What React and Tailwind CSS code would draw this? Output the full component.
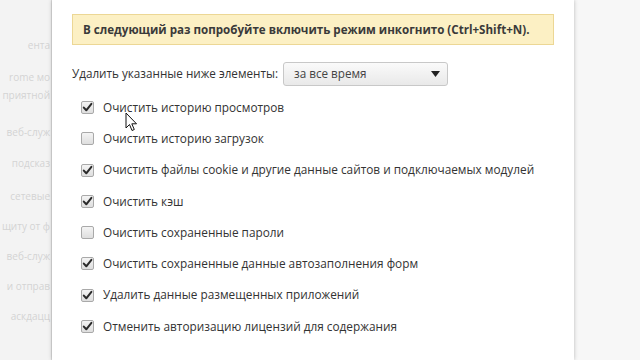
import React from 'react';

const items = [
  { label: 'Очистить историю просмотров', checked: true },
  { label: 'Очистить историю загрузок', checked: false },
  { label: 'Очистить файлы cookie и другие данные сайтов и подключаемых модулей', checked: true },
  { label: 'Очистить кэш', checked: true },
  { label: 'Очистить сохраненные пароли', checked: false },
  { label: 'Очистить сохраненные данные автозаполнения форм', checked: true },
  { label: 'Удалить данные размещенных приложений', checked: true },
  { label: 'Отменить авторизацию лицензий для содержания', checked: true },
];

// faded settings page text visible behind the dialog
const backdrop = [
  { text: 'ента', top: 'mt-[38px]' },
  { text: 'rome мо', top: 'mt-[18px]' },
  { text: 'приятной', top: 'mt-[4px]' },
  { text: 'веб-служ', top: 'mt-[23px]' },
  { text: 'подсказ', top: 'mt-[17px]' },
  { text: 'сетевые', top: 'mt-[19px]' },
  { text: 'щиту от ф', top: 'mt-[16px]' },
  { text: 'веб-служ', top: 'mt-[16px]' },
  { text: 'и отправ', top: 'mt-[16px]' },
  { text: 'аскдацц', top: 'mt-[16px]' },
];

const Checkbox = ({ checked }) => (
  <span className="w-[13px] h-[13px] shrink-0 rounded-[2px] border border-[#a9a9a9] bg-gradient-to-b from-[#f4f4f4] to-[#dedede] flex items-center justify-center">
    {checked && (
      <svg width="11" height="11" viewBox="0 0 11 11">
        <path d="M1.8 5.6 L4.3 8.3 L9.4 1.8" fill="none" stroke="#2b2b2b" strokeWidth="2" strokeLinecap="round" strokeLinejoin="round" />
      </svg>
    )}
  </span>
);

export default function App() {
  return (
    <div className="w-[640px] h-[360px] overflow-hidden flex bg-[#f6f6f6] text-[#333] font-['Open_Sans',sans-serif]">
      <div className="w-[52px] shrink-0 overflow-hidden flex flex-col items-end pr-[1px] text-[10px] leading-[14px] text-[#d4d4d4] bg-[#f3f3f3] border-r border-[#dcdcdc]">
        {backdrop.map((b, i) => (
          <div key={i} className={`whitespace-nowrap ${b.top}`}>{b.text}</div>
        ))}
      </div>
      <div className="w-[522px] shrink-0 bg-white pl-[20px] pr-[20px] pt-[14px] relative shadow-[0_0_4px_rgba(0,0,0,0.25)]">
        <div className="h-[31px] bg-[#fcf0c4] border border-[#ecd795] flex items-center pl-[10px] text-[11.6px] font-bold text-[#3a3a3a] whitespace-nowrap">
          В следующий раз попробуйте включить режим инкогнито (Ctrl+Shift+N).
        </div>
        <div className="flex items-center mt-[17px] text-[11.7px]">
          <span className="whitespace-nowrap">Удалить указанные ниже элементы:</span>
          <div className="ml-[5px] w-[165px] h-[24px] rounded-[3px] border border-[#c8c8c8] bg-gradient-to-b from-[#fafafa] to-[#e9e9e9] flex items-center justify-between pl-[10px] pr-[7px] text-[#444]">
            <span>за все время</span>
            <svg width="9" height="6" viewBox="0 0 9 6">
              <path d="M0 0 H9 L4.5 6 Z" fill="#222" />
            </svg>
          </div>
        </div>
        <div className="mt-[15px] pl-[9px] flex flex-col gap-[18.3px] text-[11.8px]">
          {items.map((it, i) => (
            <label key={i} className="flex items-center gap-[9px] h-[13px] whitespace-nowrap">
              <Checkbox checked={it.checked} />
              <span>{it.label}</span>
            </label>
          ))}
        </div>
        <svg className="absolute left-[73px] top-[112px]" width="13" height="20" viewBox="0 0 13 20">
          <path d="M1 1 L1 16 L4.5 12.5 L7 18.5 L9.3 17.5 L6.8 11.8 L11.5 11.8 Z" fill="#fff" stroke="#111" strokeWidth="1" strokeLinejoin="round" />
        </svg>
      </div>
      <div className="flex-1 bg-[#f7f7f7]" />
    </div>
  );
}
